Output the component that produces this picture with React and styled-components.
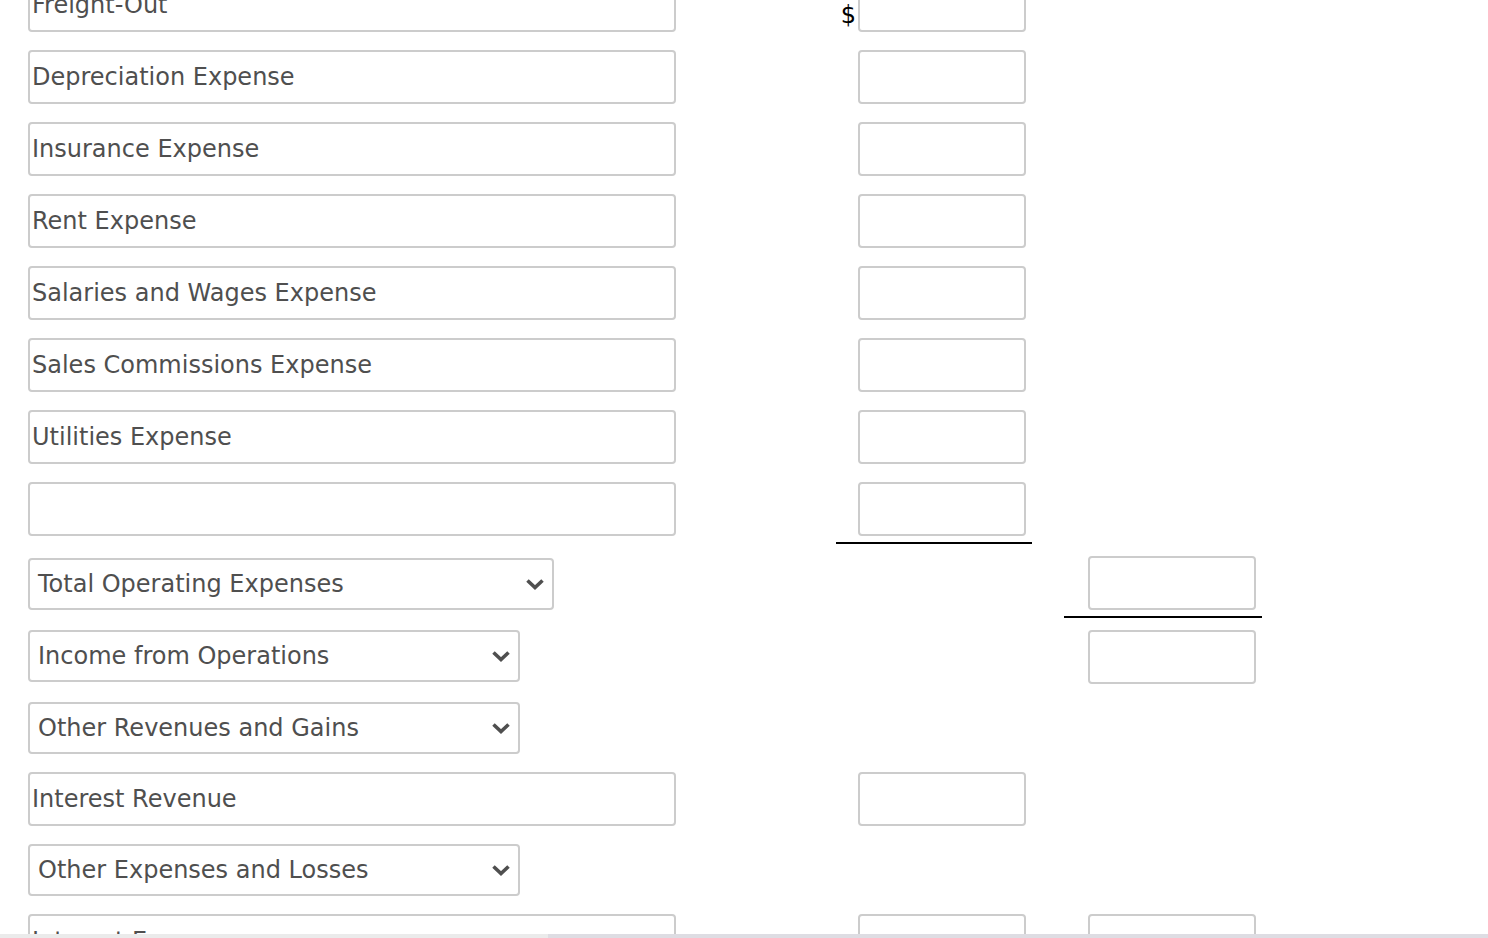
import React from 'react';
import styled, { createGlobalStyle } from 'styled-components';

const GlobalStyle = createGlobalStyle`
  html, body {
    margin: 0;
    padding: 0;
    background: #fff;
    overflow: hidden;
  }
  body {
    font-family: "DejaVu Sans", Verdana, sans-serif;
  }
`;

const Sheet = styled.div`
  display: flex;
  flex-direction: column;
  padding-left: 28px;
  margin-top: -22px;
`;

const Row = styled.div`
  display: grid;
  grid-template-columns: 648px 160px 196px 32px 198px;
  align-items: start;
  margin-top: ${p => (p.$mt ?? 18)}px;
  &:first-child {
    margin-top: 0;
  }
`;

const TextBox = styled.input`
  box-sizing: border-box;
  width: 100%;
  height: 54px;
  margin: 0;
  border: 2px solid #ccc;
  border-radius: 4px;
  padding: 0 3px 0 2px;
  font-family: "DejaVu Sans", Verdana, sans-serif;
  font-size: 24px;
  color: #4f4f4f;
  background: #fff;
  outline: none;
`;

const Select = styled.div`
  box-sizing: border-box;
  width: ${p => p.$width}px;
  height: 52px;
  margin-top: ${p => p.$mt || 0}px;
  border: 2px solid #ccc;
  border-radius: 4px;
  padding: 0 7px 0 8px;
  display: flex;
  align-items: center;
  justify-content: space-between;
  font-size: 24px;
  color: #4f4f4f;
  background: #fff;
  svg {
    flex: none;
  }
`;

const AmountCell = styled.div`
  grid-column: ${p => p.$col};
  display: flex;
  align-items: flex-end;
  justify-content: flex-end;
  padding-left: ${p => (p.$col === 5 ? 24 : 22)}px;
  padding-right: 6px;
  padding-bottom: ${p => (p.$underline ? 6 : 0)}px;
  border-bottom: ${p => (p.$underline ? '2px solid #000' : 'none')};
`;

const Dollar = styled.span`
  font-size: 24px;
  line-height: 24px;
  color: #000;
  margin-right: 2px;
  margin-bottom: 5px;
`;

const AmountBox = styled.input`
  box-sizing: border-box;
  flex: none;
  width: 168px;
  height: 54px;
  margin: 0;
  border: 2px solid #ccc;
  border-radius: 4px;
  background: #fff;
  outline: none;
`;

const ScrollTrack = styled.div`
  position: fixed;
  left: 0;
  right: 0;
  bottom: 0;
  height: 4px;
  background: #dedde3;
`;

const ScrollThumb = styled.div`
  height: 100%;
  background: #ebebeb;
`;

function Chevron() {
  return (
    <svg width="20" height="12" viewBox="0 0 20 12">
      <polyline points="2.5,2.5 10,9.5 17.5,2.5" fill="none" stroke="#4f4f4f" strokeWidth="3.6" />
    </svg>
  );
}

function Amount({ col = 3, dollar, underline }) {
  return (
    <AmountCell $col={col} $underline={underline}>
      {dollar && <Dollar>$</Dollar>}
      <AmountBox type="text" />
    </AmountCell>
  );
}

const expenseRows = [
  'Depreciation Expense',
  'Insurance Expense',
  'Rent Expense',
  'Salaries and Wages Expense',
  'Sales Commissions Expense',
  'Utilities Expense',
];

export default function App() {
  return (
    <>
      <GlobalStyle />
      <Sheet>
        <Row>
          <TextBox defaultValue="Freight-Out" />
          <Amount dollar />
        </Row>
        {expenseRows.map(label => (
          <Row key={label}>
            <TextBox defaultValue={label} />
            <Amount />
          </Row>
        ))}
        <Row>
          <TextBox defaultValue="" />
          <Amount underline />
        </Row>
        <Row $mt={12}>
          <Select $width={526} $mt={2}>
            Total Operating Expenses
            <Chevron />
          </Select>
          <Amount col={5} underline />
        </Row>
        <Row $mt={12}>
          <Select $width={492}>
            Income from Operations
            <Chevron />
          </Select>
          <Amount col={5} />
        </Row>
        <Row>
          <Select $width={492}>
            Other Revenues and Gains
            <Chevron />
          </Select>
        </Row>
        <Row>
          <TextBox defaultValue="Interest Revenue" />
          <Amount />
        </Row>
        <Row>
          <Select $width={492}>
            Other Expenses and Losses
            <Chevron />
          </Select>
        </Row>
        <Row>
          <TextBox defaultValue="Interest Expense" />
          <Amount />
          <Amount col={5} />
        </Row>
      </Sheet>
      <ScrollTrack>
        <ScrollThumb style={{ width: '548px' }} />
      </ScrollTrack>
    </>
  );
}
